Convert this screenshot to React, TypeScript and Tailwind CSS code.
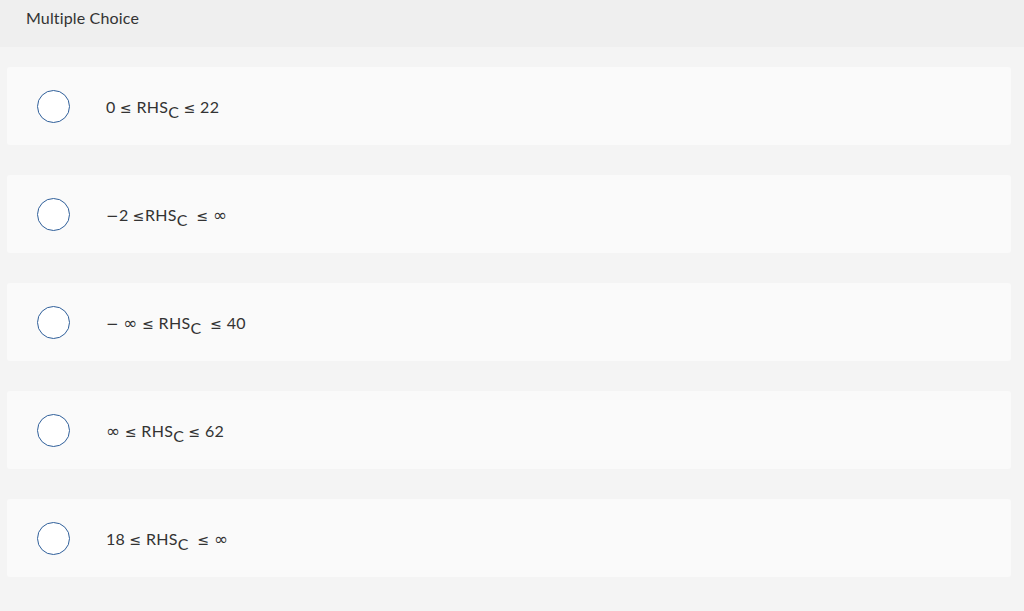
import type { ReactNode } from "react";

const Sub = ({ children }: { children: ReactNode }) => (
  <span className="relative top-[5px]">{children}</span>
);

const Le = () => <span className="font-['DejaVu_Sans'] text-[14px]">≤</span>;
const Inf = () => <span className="font-['DejaVu_Sans'] text-[17px] leading-[0]">∞</span>;
const Minus = () => <span className="font-['DejaVu_Sans'] text-[15px]">−</span>;

const choices: ReactNode[] = [
  <>0 <Le /> RHS<Sub>C</Sub> <Le /> 22</>,
  <><Minus />2 <Le />RHS<Sub>C</Sub>&nbsp; <Le /> <Inf /></>,
  <><Minus /> <Inf /> <Le /> RHS<Sub>C</Sub>&nbsp; <Le /> 40</>,
  <><Inf /> <Le /> RHS<Sub>C</Sub> <Le /> 62</>,
  <>18 <Le /> RHS<Sub>C</Sub>&nbsp; <Le /> <Inf /></>,
];

export default function App() {
  return (
    <div
      className="min-h-[611px] bg-[#f4f4f4] text-[#333333]"
      style={{ fontFamily: "Lato, 'Open Sans', sans-serif" }}
    >
      <div className="h-[47px] bg-[#efefef] pl-[26px] pt-[9px] text-[16px] leading-[18px] tracking-[0.15px]">
        Multiple Choice
      </div>
      <div className="flex flex-col gap-[30px] pl-[7px] pr-[13px] pt-[20px]">
        {choices.map((c, i) => (
          <label
            key={i}
            className="flex h-[78px] items-center rounded-[3px] bg-[#fafafa] pl-[30px]"
          >
            <span className="h-[33px] w-[33px] shrink-0 rounded-full border-[1.5px] border-[#2f5f9a] bg-white" />
            <span className="ml-[36px] pt-[3px] text-[16px] leading-[18px] tracking-[0.3px] whitespace-nowrap">{c}</span>
          </label>
        ))}
      </div>
    </div>
  );
}
